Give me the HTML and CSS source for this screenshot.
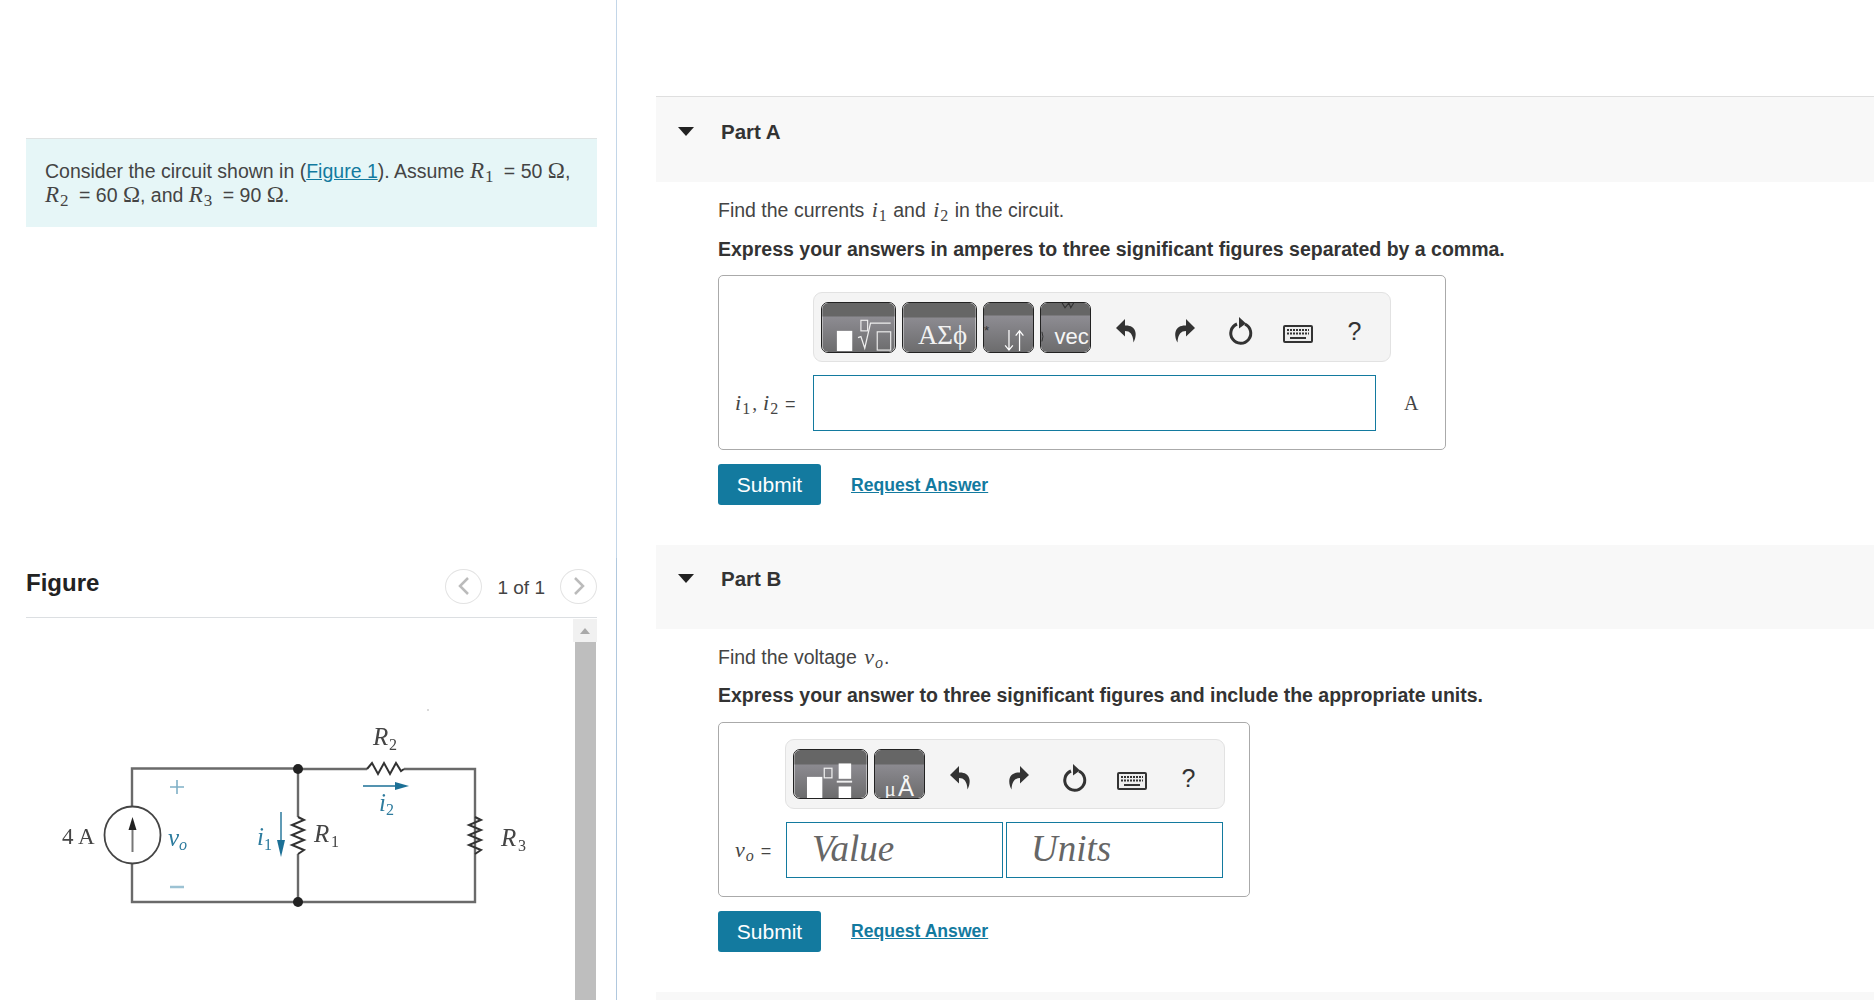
FILE: index.html
```html
<!DOCTYPE html>
<html lang="en">
<head>
<meta charset="utf-8">
<title>Circuit problem</title>
<link rel="stylesheet" href="styles.css">
</head>
<body>
<svg class="defs" width="0" height="0" aria-hidden="true">
  <symbol id="ic-undo" viewBox="0 0 22 24"><path d="M9 0 0 9l9 8.500v-5.500c5 0 8 3 8.500 11.500C22 15 20 6 9 6.500z"/></symbol>
  <symbol id="ic-redo" viewBox="0 0 22 24"><path d="M13 0l9 9-9 8.500v-5.500c-5 0-8 3-8.500 11.500C0 15 2 6 13 6.500z"/></symbol>
  <symbol id="ic-reset" viewBox="0 0 26 28"><path d="M9 7a10 10 0 1 0 8 .2" fill="none" stroke="#333" stroke-width="3"/><path d="M11 0l7 6.500-7 5z"/></symbol>
  <symbol id="ic-keys" viewBox="0 0 30 18"><rect x="1" y="1" width="28" height="16" rx="1" fill="#eee" stroke="#333" stroke-width="2"/><path d="M4 5h22M4 8.500h22" stroke="#333" stroke-width="2" stroke-dasharray="2 1" fill="none"/><path d="M7 13h16" stroke="#333" stroke-width="2" fill="none"/></symbol>
  <linearGradient id="btn-grad" x1="0" y1="0" x2="0" y2="1"><stop offset="0" stop-color="#9a98a0"/><stop offset="1" stop-color="#6c6c6d"/></linearGradient>
</svg>

<div class="page">
  <aside class="left">
    <div class="intro">
      Consider the circuit shown in (<a class="link" href="#">Figure 1</a>). Assume <i class="m">R</i><sub class="s">1</sub> = 50 <span class="o">Ω</span>,<br>
      <i class="m">R</i><sub class="s">2</sub> = 60 <span class="o">Ω</span>, and <i class="m">R</i><sub class="s">3</sub> = 90 <span class="o">Ω</span>.
    </div>
    <div class="fig-head">
      <h2 class="fig-title">Figure</h2>
      <div class="pager">
        <span class="pg-btn"><svg width="12" height="20" viewBox="0 0 12 20"><path d="M10 2 2 10l8 8" fill="none" stroke="#bbb" stroke-width="2.500"/></svg></span>
        <span class="pg-text">1 of 1</span>
        <span class="pg-btn"><svg width="12" height="20" viewBox="0 0 12 20"><path d="M2 2l8 8-8 8" fill="none" stroke="#bbb" stroke-width="2.500"/></svg></span>
      </div>
    </div>
    <div class="fig-body">
      <svg class="circuit" width="547" height="381" viewBox="26 619 547 381">
        <defs><filter id="soft"><feGaussianBlur stdDeviation="0.35"/></filter></defs>
        <g filter="url(#soft)">
          <path d="M298 768.500H132V807M132 863V902H475V769H404M367 769H298V817M298 854V902" fill="none" stroke="#6b6b6b" stroke-width="2.400"/>
          <path d="M475 769V817M475 854V902" fill="none" stroke="#6b6b6b" stroke-width="1.600"/>
          <path d="M367 769l5-6 6 11 6-11 6 11 6-11 5 8 3-2" fill="none" stroke="#333" stroke-width="2"/>
          <path d="M298 817l6 3-12 5 12 5-12 5 12 5-12 5 12 5-6 4" fill="none" stroke="#333" stroke-width="2"/>
          <path d="M475 817l6 3-12 5 12 5-12 5 12 5-12 5 12 5-6 4" fill="none" stroke="#333" stroke-width="2"/>
          <ellipse cx="132.500" cy="835" rx="28" ry="28.500" fill="#fff" stroke="#444" stroke-width="1.800"/>
          <path d="M132.500 852V826" stroke="#777" stroke-width="2"/>
          <path d="M132.500 817l-4 13h8z" fill="#222"/>
          <circle cx="298" cy="769" r="5" fill="#222"/>
          <circle cx="298" cy="902" r="5" fill="#222"/>
          <path d="M281 812V842" stroke="#1c6f96" stroke-width="1.400"/>
          <path d="M281 857l-4-17h8z" fill="#1c6f96"/>
          <path d="M363 786H396" stroke="#1c6f96" stroke-width="1.400"/>
          <path d="M409 786l-14-4v8z" fill="#1c6f96"/>
          <path d="M170 787h14M177 780v14" stroke="#7fb0c6" stroke-width="1.600"/>
          <path d="M170 887h14" stroke="#9cc2d3" stroke-width="2.500"/>
          <circle cx="428" cy="710" r="0.800" fill="#aaa"/>
          <text class="c-t" x="62" y="844">4 A</text>
          <text class="c-i" x="373" y="745">R</text><text class="c-sub" x="389" y="750">2</text>
          <text class="c-i" x="314" y="842">R</text><text class="c-sub" x="331" y="847">1</text>
          <text class="c-i" x="501" y="846">R</text><text class="c-sub" x="518" y="851">3</text>
          <text class="c-i blue" x="168" y="846">v</text><text class="c-sub blue it" x="179" y="850">o</text>
          <text class="c-i blue" x="257" y="845">i</text><text class="c-sub blue" x="264" y="850">1</text>
          <text class="c-i blue" x="379" y="811">i</text><text class="c-sub blue" x="386" y="815">2</text>
        </g>
      </svg>
      <div class="scroll">
        <div class="scroll-up"><span class="scroll-tri"></span></div>
        <div class="scroll-thumb"></div>
      </div>
    </div>
  </aside>

  <main class="right">
    <section class="part">
      <header class="part-head first"><span class="tri"></span><h3 class="part-name">Part A</h3></header>
      <div class="part-body">
        <p class="para">Find the currents <i class="cm">i</i><sub class="s">1</sub> and <i class="cm">i</i><sub class="s">2</sub> in the circuit.</p>
        <p class="para strong">Express your answers in amperes to three significant figures separated by a comma.</p>
        <div class="box">
          <div class="toolbar tb-a">
            <div class="tb-btns">
              <svg class="tbtn" width="75" height="51" viewBox="0 0 75 51"><rect width="75" height="51" rx="6" fill="url(#btn-grad)"/><path d="M0 14V6a6 6 0 0 1 6-6h63a6 6 0 0 1 6 6v8z" fill="#666"/><rect x="15" y="29" width="16" height="21" fill="#fff"/><rect x="40" y="18" width="7" height="11" fill="none" stroke="#eee" stroke-width="1.200"/><path d="M37 36l3-1 4 12 6-26h21" fill="none" stroke="#eee" stroke-width="1.300"/><rect x="57" y="30" width="14" height="19" fill="none" stroke="#eee" stroke-width="1.200"/></svg>
              <svg class="tbtn" width="75" height="51" viewBox="0 0 75 51"><rect width="75" height="51" rx="6" fill="url(#btn-grad)"/><path d="M0 15V6a6 6 0 0 1 6-6h63a6 6 0 0 1 6 6v9z" fill="#666"/><text class="tb-serif" x="15" y="43">ΑΣϕ</text></svg>
              <svg class="tbtn" width="51" height="51" viewBox="0 0 51 51"><rect width="51" height="51" rx="6" fill="url(#btn-grad)"/><path d="M0 13V6a6 6 0 0 1 6-6h39a6 6 0 0 1 6 6v7z" fill="#666"/><text class="tb-dark" x="0" y="33">*</text><path d="M26 28v21M22 44l4 5 4-5M37 50V29M33 34l4-5 4 5" fill="none" stroke="#fff" stroke-width="1.300"/></svg>
              <svg class="tbtn" width="51" height="51" viewBox="0 0 51 51"><rect width="51" height="51" rx="6" fill="url(#btn-grad)"/><path d="M0 13V6a6 6 0 0 1 6-6h39a6 6 0 0 1 6 6v7z" fill="#666"/><path d="M22 0l3 5 4-5 2 5 3-5" fill="none" stroke="#333" stroke-width="1.200"/><path d="M1 30q2 5 0 10" fill="none" stroke="#333" stroke-width="1"/><text class="tb-sans" x="14" y="43">vec</text></svg>
            </div>
            <div class="tb-icons">
              <svg class="ic" width="22" height="24"><use href="#ic-undo"/></svg>
              <svg class="ic" width="22" height="24"><use href="#ic-redo"/></svg>
              <svg class="ic" width="26" height="28"><use href="#ic-reset"/></svg>
              <svg class="ic kb" width="30" height="18"><use href="#ic-keys"/></svg>
              <span class="help">?</span>
            </div>
          </div>
          <div class="ans-row">
            <span class="ans-label lbl-a"><i class="cm">i</i><sub class="s">1</sub><span class="comma">,</span><i class="cm">i</i><sub class="s">2</sub> <span class="eq">=</span></span>
            <div class="field field-a"></div>
            <span class="unit">A</span>
          </div>
        </div>
        <div class="actions"><button class="submit">Submit</button><a class="req" href="#">Request Answer</a></div>
      </div>
    </section>

    <section class="part part-b">
      <header class="part-head"><span class="tri"></span><h3 class="part-name">Part B</h3></header>
      <div class="part-body">
        <p class="para">Find the voltage <i class="cm">v</i><sub class="s it">o</sub>.</p>
        <p class="para strong">Express your answer to three significant figures and include the appropriate units.</p>
        <div class="box box-b">
          <div class="toolbar tb-b">
            <div class="tb-btns">
              <svg class="tbtn" width="75" height="50" viewBox="0 0 75 50"><rect width="75" height="50" rx="6" fill="url(#btn-grad)"/><path d="M0 15V6a6 6 0 0 1 6-6h63a6 6 0 0 1 6 6v9z" fill="#666"/><rect x="13" y="28" width="16" height="22" fill="#fff"/><rect x="31" y="19" width="8" height="10" fill="none" stroke="#eee" stroke-width="1.300"/><rect x="46" y="14" width="13" height="16" fill="#fff"/><rect x="44" y="32" width="16" height="2" fill="#eee"/><rect x="46" y="38" width="13" height="12" fill="#fff"/></svg>
              <svg class="tbtn" width="51" height="50" viewBox="0 0 51 50"><rect width="51" height="50" rx="6" fill="url(#btn-grad)"/><path d="M0 15V6a6 6 0 0 1 6-6h39a6 6 0 0 1 6 6v9z" fill="#666"/><text class="tb-serif sm" x="10" y="48">μ</text><text class="tb-sans lg" x="24" y="48">Å</text></svg>
            </div>
            <div class="tb-icons">
              <svg class="ic" width="22" height="24"><use href="#ic-undo"/></svg>
              <svg class="ic" width="22" height="24"><use href="#ic-redo"/></svg>
              <svg class="ic" width="26" height="28"><use href="#ic-reset"/></svg>
              <svg class="ic kb" width="30" height="18"><use href="#ic-keys"/></svg>
              <span class="help">?</span>
            </div>
          </div>
          <div class="ans-row">
            <span class="ans-label lbl-b"><i class="cm">v</i><sub class="s it">o</sub> <span class="eq">=</span></span>
            <div class="field field-b"><span class="ph">Value</span></div>
            <div class="field field-b field-u"><span class="ph">Units</span></div>
          </div>
        </div>
        <div class="actions"><button class="submit">Submit</button><a class="req" href="#">Request Answer</a></div>
      </div>
    </section>

    <div class="next-part"></div>
  </main>
</div>
</body>
</html>
```

FILE: styles.css
```css
* { box-sizing: border-box; }
html, body { margin: 0; height: 1000px; overflow: hidden; background: #fff; }
body { font-family: "Liberation Sans", Arial, sans-serif; font-size: 19.500px; line-height: 24px; color: #444; }
.defs { position: absolute; }

.page { display: flex; height: 1000px; }

/* Left column */
.left { position: relative; flex: 0 0 617px; padding: 138px 19px 0 26px; border-right: 1px solid #c3d6e8; }
.left::after { content: ""; position: absolute; right: -1px; top: 558px; bottom: 0; width: 1px; background: #b0c8de; }
.intro { height: 89px; padding: 20px 0 0 19px; background: #e6f6f7; border-top: 1px solid #dfe3e3; white-space: nowrap; }
.link { color: #137a9f; }
.m { font-family: "Liberation Serif", serif; font-size: 23px; }
.o { font-family: "Liberation Serif", serif; font-size: 23px; }
.cm { font-family: "Liberation Serif", serif; font-size: 22px; padding: 0 1px 0 2px; }
.s { font-family: "Liberation Serif", serif; font-size: 16px; line-height: 0; vertical-align: -4px; }
.intro .s { font-size: 17px; margin: 0 5px 0 1px; }
.para .s { margin-right: 1px; }
.it { font-style: italic; }

.fig-head { display: flex; justify-content: space-between; align-items: flex-start; margin-top: 340px; height: 51px; border-bottom: 1px solid #dcdfe2; }
.fig-title { margin: 0; font-size: 24px; line-height: 32px; font-weight: 700; color: #222; }
.pager { display: flex; align-items: center; gap: 15px; height: 36px; margin-top: 1px; }
.pg-btn { display: flex; align-items: center; justify-content: center; width: 37px; height: 35px; border: 1px solid #e3e3e3; border-radius: 50%; }
.pg-text { padding-top: 4px; font-size: 19px; color: #444; }

.fig-body { display: flex; justify-content: space-between; height: 382px; padding-top: 1px; }
.circuit { display: block; flex: none; }
.c-t { font: 23px "Liberation Serif", serif; fill: #444; }
.c-i { font: italic 25px "Liberation Serif", serif; fill: #444; }
.c-sub { font: 16px "Liberation Serif", serif; fill: #444; }
.blue { fill: #2d7b9e; }
.c-sub.it { font-style: italic; }
.scroll { display: flex; flex: none; flex-direction: column; align-items: center; width: 24px; }
.scroll-up { display: flex; align-items: center; justify-content: center; width: 24px; height: 23px; background: #f1f1f1; }
.scroll-tri { width: 0; height: 0; border: 5px solid transparent; border-top: 0; border-bottom: 6px solid #a9a9a9; }
.scroll-thumb { flex: 1; width: 21px; background: #bebebe; }

/* Right column */
.right { flex: 1; padding: 96px 0 0 39px; min-width: 0; }
.part { margin-bottom: 40px; }
.part-head { display: flex; align-items: flex-start; height: 84px; padding: 21px 0 0 22px; background: #f8f8f8; }
.part-head.first { height: 86px; border-top: 1px solid #dfdfdf; padding-top: 22px; }
.tri { width: 0; height: 0; margin-top: 8px; border-style: solid; border-width: 9px 8px 0; border-color: #222 transparent transparent; }
.part-name { margin: 0 0 0 27px; font-size: 20.500px; line-height: 26px; font-weight: 700; color: #333; }
.part-body { padding-left: 62px; }
.para { margin: 16px 0 0; font-size: 19.500px; line-height: 24px; color: #444; white-space: nowrap; }
.para.strong { margin-top: 15px; font-weight: 700; color: #333; }
.part-b .para.strong { margin-top: 14px; }

.box { width: 728px; height: 175px; margin-top: 14px; padding: 16px 0 0; border: 1px solid #aaa; border-radius: 5px; }
.box-b { width: 532px; margin-top: 15px; }
.toolbar { display: flex; align-items: center; height: 70px; padding-left: 7px; background: #f4f4f4; border: 1px solid #e2e2e2; border-radius: 9px; }
.tb-a { width: 578px; margin-left: 94px; }
.tb-b { width: 440px; margin-left: 66px; }
.tb-btns { display: flex; gap: 6px; }
.tbtn { display: block; border: 1px solid #222; border-radius: 7px; }
.tb-icons { display: grid; grid-template-columns: repeat(5, 57px); justify-items: center; align-items: center; margin: 8px 0 0 7px; }
.ic { display: block; fill: #333; }
.kb { margin-top: 6px; }
.help { font-size: 25px; line-height: 28px; color: #333; }
.tb-serif { font: 28px "Liberation Serif", serif; fill: #f2f2f2; }
.tb-serif.sm { font-size: 22px; }
.tb-sans { font: 23px "Liberation Sans", sans-serif; fill: #f6f6f6; }
.tb-sans.lg { font-size: 25px; }
.tb-dark { font: 14px "Liberation Sans", sans-serif; fill: #333; }

.ans-row { display: flex; align-items: center; margin-top: 13px; }
.ans-label { flex: 0 0 94px; padding-left: 14px; font-family: "Liberation Serif", serif; white-space: nowrap; }
.lbl-b { flex-basis: 67px; }
.comma { margin: 0 4px 0 2px; }
.eq { font-family: "Liberation Sans", sans-serif; font-size: 18px; margin-left: 2px; }
.field { height: 56px; border: 1px solid #137a9f; background: #fff; }
.field-a { width: 563px; }
.field-b { width: 217px; margin-right: 3px; padding-left: 25px; }
.field-u { padding-left: 24px; }
.ph { font: italic 37px/52px "Liberation Serif", serif; color: #666; }
.unit { margin-left: 28px; font-family: "Liberation Serif", serif; font-size: 20px; }

.actions { display: flex; align-items: center; margin-top: 14px; height: 41px; }
.submit { width: 103px; height: 41px; padding: 0; border: 0; border-radius: 3px; background: #137a9f; color: #fff; font: 21px "Liberation Sans", sans-serif; }
.req { margin-left: 30px; font-size: 17.600px; font-weight: 700; color: #137a9f; }
.part-b .req { margin-bottom: 2px; }
.next-part { height: 9px; background: #f8f8f8; }
```
